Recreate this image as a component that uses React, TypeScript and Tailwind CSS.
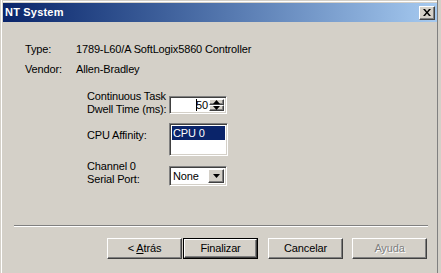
import React from 'react';

const font = { fontFamily: '"Liberation Sans", Arial, sans-serif' };

const raised = 'border border-t-white border-l-white border-r-[#404040] border-b-[#404040] shadow-[inset_-1px_-1px_0_#808080,inset_1px_1px_0_#d4d0c8]';
const sunken = 'border border-t-[#808080] border-l-[#808080] border-r-white border-b-white shadow-[inset_1px_1px_0_#404040,inset_-1px_-1px_0_#d4d0c8]';

const Btn = ({ children, def, disabled, cls = '' }: { children: React.ReactNode; def?: boolean; disabled?: boolean; cls?: string }) => (
  <div className={`w-[75px] h-[21px] ${def ? 'border border-black' : ''} ${cls}`}>
    <div className={`w-full h-full bg-[#d4d0c8] ${raised} flex items-center justify-center text-[11px] ${disabled ? 'text-[#808080] [text-shadow:1px_1px_0_#fff]' : 'text-black'}`}>
      {children}
    </div>
  </div>
);

const Tri = ({ up }: { up?: boolean }) => (
  <svg width="7" height="4" viewBox="0 0 7 4">
    <path d={up ? 'M3.5 0 L7 4 L0 4 Z' : 'M0 0 L7 0 L3.5 4 Z'} fill="#000" />
  </svg>
);

export default function App() {
  return (
    <div className="w-[441px] h-[273px] bg-[#d4d0c8] flex overflow-hidden tracking-[-0.15px]" style={font}>
      <div className="w-px h-full bg-[#d4d0c8]" />
      <div className="w-px h-full bg-white" />
      <div className="w-px h-full bg-[#d4d0c8]" />
      <div className="w-[434px] flex flex-col">
        <div className="h-px bg-[#d4d0c8]" />
        <div className="h-px bg-white" />
        <div className="h-px bg-[#d4d0c8]" />
        {/* title bar */}
        <div className="h-[19px] bg-gradient-to-r from-[#0a246a] to-[#a6caf0] flex items-center justify-between pl-[2px] pr-[2px]">
          <span className="text-white font-bold text-[11px] tracking-[0.2px]">NT System</span>
          <div className={`w-[16px] h-[14px] bg-[#d4d0c8] ${raised} flex items-center justify-center`}>
            <svg width="8" height="7" viewBox="0 0 8 7">
              <path d="M0 0 L2 0 L4 2.5 L6 0 L8 0 L5 3.5 L8 7 L6 7 L4 4.5 L2 7 L0 7 L3 3.5 Z" fill="#000" />
            </svg>
          </div>
        </div>

        {/* info */}
        <div className="flex flex-col text-[11px] text-black pl-[22px] mt-[21px] gap-[7px]">
          <div className="flex h-[13px] items-center">
            <span className="w-[51px]">Type:</span>
            <span>1789-L60/A SoftLogix5860 Controller</span>
          </div>
          <div className="flex h-[13px] items-center">
            <span className="w-[51px]">Vendor:</span>
            <span>Allen-Bradley</span>
          </div>
        </div>

        {/* form */}
        <div className="flex flex-col pl-[84px] mt-[14px] text-[11px] text-black">
          <div className="flex">
            <div className="w-[82px] flex flex-col leading-[13px]">
              <span>Continuous Task</span>
              <span>Dwell Time (ms):</span>
            </div>
            <div className={`mt-[6px] w-[58px] h-[18px] bg-white ${sunken} flex items-center p-[2px]`}>
              <div className="flex-1 flex items-center justify-end pr-[1px]">
                <span className="w-px h-[12px] bg-black mr-[-1px]" />
                <span>50</span>
              </div>
              <div className="w-[15px] h-full flex flex-col">
                <div className={`flex-1 bg-[#d4d0c8] ${raised} flex items-center justify-center`}><Tri up /></div>
                <div className={`flex-1 bg-[#d4d0c8] ${raised} flex items-center justify-center`}><Tri /></div>
              </div>
            </div>
          </div>

          <div className="flex mt-[7px]">
            <div className="w-[82px] pt-[4px]">CPU Affinity:</div>
            <div className={`w-[59px] h-[33px] bg-white ${sunken} p-[2px]`}>
              <div className="h-[14px] bg-[#0a246a] text-white flex items-center pl-[1px]">CPU 0</div>
            </div>
          </div>

          <div className="flex mt-[4px]">
            <div className="w-[82px] flex flex-col leading-[13px]">
              <span>Channel 0</span>
              <span>Serial Port:</span>
            </div>
            <div className={`mt-[6px] w-[58px] h-[20px] bg-white ${sunken} flex items-center p-[2px]`}>
              <span className="flex-1 pl-[1px]">None</span>
              <div className={`w-[16px] h-full bg-[#d4d0c8] ${raised} flex items-center justify-center`}><Tri /></div>
            </div>
          </div>
        </div>

        <div className="flex-1" />
        <div className="ml-[11px] w-[414px] h-px bg-[#808080]" />
        <div className="ml-[11px] w-[414px] h-px bg-white" />

        <div className="flex mt-[11px] mb-[14px] pl-[104px]">
          <Btn><span>&lt; <u>A</u>trás</span></Btn>
          <Btn def cls="ml-px">Finalizar</Btn>
          <Btn cls="ml-[10px]">Cancelar</Btn>
          <Btn disabled cls="ml-[9px]">Ayuda</Btn>
        </div>
      </div>
      <div className="w-px h-full bg-[#808080]" />
      <div className="flex-1 h-full bg-[#d4d0c8]" />
    </div>
  );
}
